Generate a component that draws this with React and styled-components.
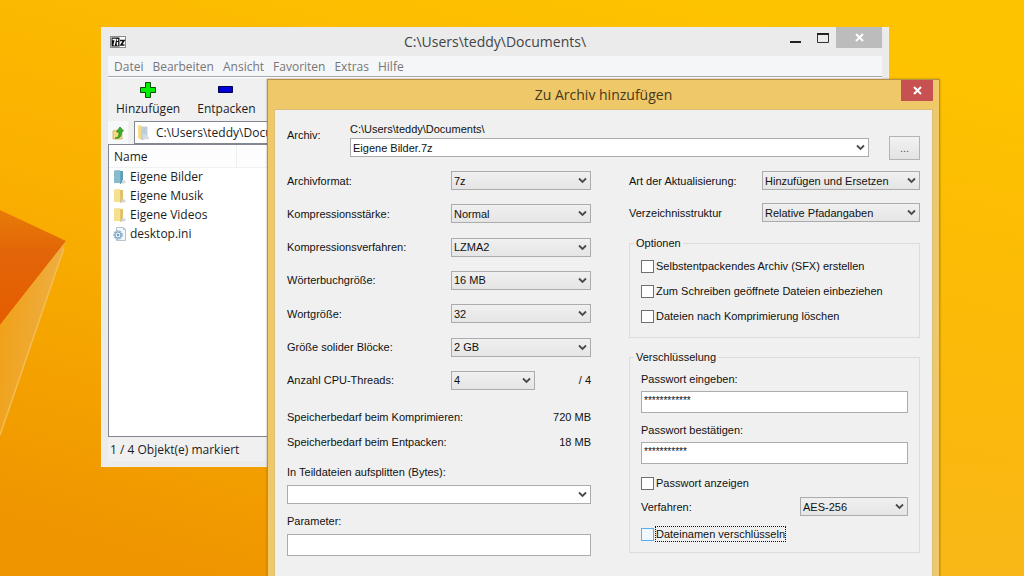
import { useState } from 'react';
import styled, { createGlobalStyle } from 'styled-components';

const GlobalStyle = createGlobalStyle`
  *, *::before, *::after {
    box-sizing: border-box;
  }

  body {
    margin: 0;
    background: #fbb000;
  }

  button, input, select {
    font: inherit;
    color: inherit;
    border-radius: 0;
    margin: 0;
  }
`;

const Desktop = styled.div`
  position: relative;
  height: 100vh;
  overflow: hidden;
`;

const Wallpaper = styled.svg`
  display: block;
  width: 100%;
  height: 100%;
`;

/* File manager window */

const ManagerWindow = styled.section`
  position: absolute;
  top: 27px;
  left: 101px;
  right: 135px;
  bottom: 109px;
  display: flex;
  flex-direction: column;
  padding: 0 6px 5px;
  border: 1px solid #f3efe4;
  border-top: 0;
  background: #ebebeb;
  color: #1c1c1c;
  font: 12px/16px 'Open Sans', sans-serif;
`;

const TitleBar = styled.header`
  display: grid;
  grid-template-columns: 1fr auto 1fr;
  height: ${({ $height }) => $height}px;
  flex: none;
`;

const Title = styled.h1`
  grid-column: 2;
  align-self: center;
  margin: 0;
  color: ${({ $color }) => $color};
  font: 14px/20px 'Open Sans', sans-serif;
`;

const AppIcon = styled.svg`
  align-self: center;
  margin-left: 2px;
`;

const WindowButtons = styled.div`
  grid-column: 3;
  display: flex;
  justify-content: flex-end;
  align-items: flex-start;
`;

const WindowButton = styled.button`
  display: flex;
  align-items: center;
  justify-content: center;
  width: ${({ $width }) => $width}px;
  height: 21px;
  padding: 0;
  border: 0;
  background: ${({ $background }) => $background || 'transparent'};
`;

const MenuBar = styled.nav`
  display: flex;
  gap: 9px;
  height: 21px;
  padding: 3px 6px 1px;
  border-bottom: 1px solid #a5a8ac;
  background: #f5f6f7;
  color: #777;
`;

const MenuButton = styled.button`
  padding: 0;
  border: 0;
  background: none;
`;

const ToolBar = styled.div`
  display: flex;
  gap: 17px;
  height: 44px;
  padding: 4px 8px 0;
  border-top: 1px solid #fff;
  background: #f0f0f0;
`;

const ToolButton = styled.button`
  display: flex;
  flex-direction: column;
  align-items: center;
  gap: 3px;
  padding: 0;
  border: 0;
  background: none;
`;

const AddressRow = styled.div`
  display: flex;
  gap: 6px;
  height: 23px;
  background: #f0f0f0;
`;

const UpButton = styled.button`
  width: 20px;
  padding: 4px 0 0;
  border: 0;
  background: #f6f8fa;
`;

const AddressField = styled.div`
  flex: 1;
  display: flex;
  align-items: center;
  gap: 6px;
  padding: 0 2px;
  border: 1px solid #828790;
  background: #fff;
`;

const AddressInput = styled.input`
  flex: 1;
  min-width: 0;
  padding: 0;
  border: 0;
  background: none;
  outline: none;
`;

const FileList = styled.div`
  flex: 1;
  border: 1px solid #828790;
  background: #fff;
`;

const FileTable = styled.table`
  border-collapse: collapse;
  width: 100%;
`;

const HeadCell = styled.th`
  width: ${({ $width }) => $width || 'auto'};
  height: 22px;
  padding: 2px 5px 0;
  border-right: 1px solid #edf0f3;
  border-bottom: 1px solid #f0f1f3;
  background: #fdfdfe;
  font-weight: 400;
  text-align: left;
`;

const FileCell = styled.td`
  height: 19px;
  padding: 0 4px;
`;

const FileName = styled.span`
  display: flex;
  align-items: center;
  gap: 3px;
`;

const StatusBar = styled.footer`
  height: 24px;
  padding: 5px 2px 3px;
  background: #f0f0f0;
`;

/* Add to archive dialog */

const DialogWindow = styled.section`
  position: absolute;
  top: 79px;
  left: 267px;
  right: 84px;
  min-height: 100%;
  display: flex;
  flex-direction: column;
  padding: 0 6px 6px;
  border: 1px solid #b78f46;
  background: #efc869;
  box-shadow: 0 0 2px rgba(90, 60, 0, 0.4);
`;

const DialogBody = styled.form`
  flex: 1;
  padding: 12px 12px 0;
  border: 1px solid #dcbd75;
  background: #f0f0f0;
  color: #111;
  font: 11px/14px 'Liberation Sans', Arial, sans-serif;
`;

const ArchiveRow = styled.div`
  display: grid;
  grid-template-columns: 63px 1fr 31px;
  height: 38px;
  margin-bottom: 11px;
`;

const ArchiveLabel = styled.label`
  margin-top: 6px;
`;

const ArchiveField = styled.div`
  display: flex;
  flex-direction: column;
  gap: 2px;
  margin-right: 20px;
`;

const BrowseButton = styled.button`
  align-self: end;
  height: 24px;
  padding: 0;
  border: 1px solid #b4b4b4;
  background: linear-gradient(#f2f2f2, #e3e3e3);
  color: #555;
`;

const Columns = styled.div`
  display: grid;
  grid-template-columns: 304fr 291fr;
  gap: 38px;
`;

const Column = styled.div`
  display: flex;
  flex-direction: column;
`;

const Settings = styled.div`
  display: flex;
  flex-direction: column;
  justify-content: space-between;
  height: ${({ $height }) => $height}px;
`;

const Row = styled.div`
  display: flex;
  align-items: center;
  justify-content: space-between;
`;

const Controls = styled.div`
  display: flex;
  align-items: center;
  justify-content: space-between;
  width: ${({ $width }) => $width}px;
`;

const SelectBox = styled.span`
  display: grid;
  width: ${({ $width }) => ($width ? `${$width}px` : '100%')};

  > * {
    grid-area: 1 / 1;
  }
`;

const SelectInput = styled.select`
  appearance: none;
  width: 100%;
  height: 19px;
  padding: 0 18px 0 2px;
  border: 1px solid #acacac;
  background: ${({ $editable }) => ($editable ? '#fff' : 'linear-gradient(#f0f0f0, #e5e5e5)')};
  outline: none;
`;

const Arrow = styled.svg`
  align-self: center;
  justify-self: end;
  margin-right: 4px;
  pointer-events: none;
`;

const Memory = styled.div`
  display: flex;
  flex-direction: column;
  gap: 11px;
  margin: 20px 0 16px;
`;

const Field = styled.div`
  display: flex;
  flex-direction: column;
  gap: ${({ $gap }) => $gap}px;
`;

const TextInput = styled.input`
  width: 100%;
  height: 22px;
  padding: 0 2px 4px;
  border: 1px solid #acacac;
  background: #fff;
  outline: none;
  font-size: ${({ $masked }) => ($masked ? 10 : 11)}px;
`;

const Group = styled.fieldset`
  min-width: 0;
  margin: ${({ $top }) => $top}px 0 0;
  padding: 0;
  border: 1px solid #dcdcdc;
`;

const Legend = styled.legend`
  margin-left: 4px;
  padding: 0 2px;
`;

const GroupBody = styled.div`
  display: flex;
  flex-direction: column;
  gap: ${({ $gap }) => $gap}px;
  padding: ${({ $padding }) => $padding};
`;

const CheckLabel = styled.label`
  display: flex;
  align-items: center;
  gap: 2px;
  height: 14px;
`;

const CheckInput = styled.input`
  appearance: none;
  flex: none;
  width: 13px;
  height: 13px;
  border: 1px solid ${({ $hot }) => ($hot ? '#5badf0' : '#707070')};
  background: ${({ $hot }) => ($hot ? '#f0f8ff' : '#fff')};
  outline: none;

  &:checked {
    box-shadow: inset 0 0 0 2px #fff, inset 0 0 0 8px #333;
  }
`;

const CheckText = styled.span`
  outline: ${({ $focused }) => ($focused ? '1px dotted #111' : 'none')};
`;

const SETTINGS = [
  { id: 'format', label: 'Archivformat:', value: '7z' },
  { id: 'level', label: 'Kompressionsstärke:', value: 'Normal' },
  { id: 'method', label: 'Kompressionsverfahren:', value: 'LZMA2' },
  { id: 'dictionary', label: 'Wörterbuchgröße:', value: '16 MB' },
  { id: 'word', label: 'Wortgröße:', value: '32' },
  { id: 'solid', label: 'Größe solider Blöcke:', value: '2 GB' },
  { id: 'threads', label: 'Anzahl CPU-Threads:', value: '4', width: 84, suffix: '/ 4' },
];

const UPDATE_SETTINGS = [
  { id: 'update', label: 'Art der Aktualisierung:', value: 'Hinzufügen und Ersetzen' },
  { id: 'paths', label: 'Verzeichnisstruktur', value: 'Relative Pfadangaben' },
];

const OPTIONS = [
  'Selbstentpackendes Archiv (SFX) erstellen',
  'Zum Schreiben geöffnete Dateien einbeziehen',
  'Dateien nach Komprimierung löschen',
];

const MENUS = ['Datei', 'Bearbeiten', 'Ansicht', 'Favoriten', 'Extras', 'Hilfe'];

const FILES = [
  { name: 'Eigene Bilder', icon: <FolderIcon front="#86bccd" back="#5f9fb6" /> },
  { name: 'Eigene Musik', icon: <FolderIcon /> },
  { name: 'Eigene Videos', icon: <FolderIcon /> },
  { name: 'desktop.ini', icon: <ConfigIcon /> },
];

function FolderIcon({ front = '#f5df90', back = '#dfc062' }) {
  return (
    <svg width="14" height="16" viewBox="0 0 14 16" aria-hidden="true">
      <path d="M6 2h4v10l1 1v1H6z" fill={back} />
      <path d="M1 1.500l5-.5 2 1v13l-2-1H1z" fill={front} />
      <path d="M7.500 2v13" stroke={back} strokeWidth=".8" />
      <path d="M9 11l3 .5 1 2-4 1.500z" fill="#d3d8dc" />
    </svg>
  );
}

function ConfigIcon() {
  return (
    <svg width="14" height="16" viewBox="0 0 14 16" aria-hidden="true">
      <path d="M3.500 1.500h7l2 2v11h-9z" fill="#f3f7fa" stroke="#b7c3cd" />
      <path d="M10.500 1.500v2h2" fill="none" stroke="#b7c3cd" />
      <circle cx="5" cy="9" r="4" fill="#dcecf7" stroke="#8fb2cd" strokeWidth="1.500" strokeDasharray="2 .8" />
      <circle cx="5" cy="9" r="3" fill="#e6f1f9" stroke="#7ba3c4" />
      <circle cx="5" cy="9" r="1.200" fill="#6d97ba" />
    </svg>
  );
}

function DocumentsIcon() {
  return (
    <svg width="13" height="17" viewBox="0 0 13 17" aria-hidden="true">
      <path d="M1 1l4 1v14l-4-2z" fill="#f5dc84" />
      <path d="M5 3h5v10l-5 3z" fill="#cfdde8" stroke="#9fb3c4" strokeWidth=".6" />
      <path d="M6 5h3M6 7h3M6 9h3" stroke="#8fa9c0" strokeWidth=".6" />
      <path d="M9 12l3 1v2l-7 1z" fill="#d8dcdf" />
    </svg>
  );
}

function UpIcon() {
  return (
    <svg width="12" height="14" viewBox="0 0 12 14" aria-hidden="true">
      <path d="M1 5l4-1 5 2v7H1z" fill="#f3dc7c" stroke="#c9a63d" strokeWidth=".7" />
      <path d="M3 12c3 0 4-1.500 4-6H4.500l3.500-5 3.500 4-2 .5c0 5-2 7.500-6.500 6.500z" fill="#38b32c" stroke="#1b7a17" strokeWidth=".7" />
    </svg>
  );
}

function SevenZipIcon() {
  return (
    <AppIcon width="16" height="12" viewBox="0 0 16 12" aria-hidden="true">
      <path d="M0 0h16v12H0z" fill="#8a8a8a" />
      <path d="M1 1h14v10H1z" fill="#fff" />
      <path d="M1.500 1.500h8v9h-8z" fill="#111" />
      <path d="M2.500 3.500h3L4 9.500M7.500 3v2M7.500 6v3.500" fill="none" stroke="#fff" strokeWidth="1.400" />
      <path d="M10 4.500h4l-3 4.500h3.500" fill="none" stroke="#111" strokeWidth="1.600" />
    </AppIcon>
  );
}

function CloseIcon() {
  return (
    <svg width="9" height="9" viewBox="0 0 9 9" aria-hidden="true">
      <path d="M1 1l7 7M8 1L1 8" stroke="#fff" strokeWidth="2" />
    </svg>
  );
}

function Select({ id, value, width, label, editable }) {
  return (
    <SelectBox $width={width}>
      <SelectInput id={id} aria-label={label} defaultValue={value} $editable={editable}>
        <option>{value}</option>
      </SelectInput>
      <Arrow width="9" height="7" viewBox="0 0 9 7" aria-hidden="true">
        <path d="M1 1.500l3.500 3.500L8 1.500" fill="none" stroke="#4a4a4a" strokeWidth="1.800" />
      </Arrow>
    </SelectBox>
  );
}

function Checkbox({ children, hot }) {
  const [checked, setChecked] = useState(false);

  return (
    <CheckLabel>
      <CheckInput
        type="checkbox"
        checked={checked}
        onChange={(e) => setChecked(e.target.checked)}
        $hot={hot}
      />
      <CheckText $focused={hot}>{children}</CheckText>
    </CheckLabel>
  );
}

function FileManager() {
  return (
    <ManagerWindow>
      <TitleBar $height={29}>
        <SevenZipIcon />
        <Title $color="#444">C:\Users\teddy\Documents\</Title>
        <WindowButtons>
          <WindowButton type="button" $width={27} aria-label="Minimieren">
            <svg width="11" height="12" viewBox="0 0 11 12" aria-hidden="true">
              <path d="M0 10h11" stroke="#222" strokeWidth="2" />
            </svg>
          </WindowButton>
          <WindowButton type="button" $width={27} aria-label="Maximieren">
            <svg width="12" height="10" viewBox="0 0 12 10" aria-hidden="true">
              <path d="M.5 1.500h11v8H.5z" fill="none" stroke="#333" />
              <path d="M0 1h12" stroke="#222" strokeWidth="2" />
            </svg>
          </WindowButton>
          <WindowButton type="button" $width={46} $background="#bcbcbc" aria-label="Schließen">
            <CloseIcon />
          </WindowButton>
        </WindowButtons>
      </TitleBar>
      <MenuBar>
        {MENUS.map((menu) => (
          <MenuButton key={menu} type="button">{menu}</MenuButton>
        ))}
      </MenuBar>
      <ToolBar>
        <ToolButton type="button">
          <svg width="16" height="16" viewBox="0 0 16 16" aria-hidden="true">
            <path d="M5.500.5h5v5h5v5h-5v5h-5v-5h-5v-5h5z" fill="#0e0" stroke="#064d06" />
          </svg>
          Hinzufügen
        </ToolButton>
        <ToolButton type="button">
          <svg width="16" height="16" viewBox="0 0 16 16" aria-hidden="true">
            <path d="M.5 4.500h14v6H.5z" fill="#0000d8" stroke="#000050" />
          </svg>
          Entpacken
        </ToolButton>
      </ToolBar>
      <AddressRow>
        <UpButton type="button" aria-label="Übergeordneter Ordner">
          <UpIcon />
        </UpButton>
        <AddressField>
          <DocumentsIcon />
          <AddressInput aria-label="Adresse" defaultValue="C:\Users\teddy\Documents\" />
        </AddressField>
      </AddressRow>
      <FileList>
        <FileTable>
          <thead>
            <tr>
              <HeadCell scope="col" $width="127px">Name</HeadCell>
              <HeadCell as="td" />
            </tr>
          </thead>
          <tbody>
            {FILES.map((file) => (
              <tr key={file.name}>
                <FileCell colSpan={2}>
                  <FileName>
                    {file.icon}
                    {file.name}
                  </FileName>
                </FileCell>
              </tr>
            ))}
          </tbody>
        </FileTable>
      </FileList>
      <StatusBar>1 / 4 Objekt(e) markiert</StatusBar>
    </ManagerWindow>
  );
}

function AddToArchive() {
  return (
    <DialogWindow role="dialog" aria-labelledby="dialog-title">
      <TitleBar $height={29}>
        <Title id="dialog-title" as="h2" $color="#45391c">Zu Archiv hinzufügen</Title>
        <WindowButtons>
          <WindowButton type="button" $width={32} $background="#c75050" aria-label="Schließen">
            <CloseIcon />
          </WindowButton>
        </WindowButtons>
      </TitleBar>
      <DialogBody onSubmit={(e) => e.preventDefault()}>
        <ArchiveRow>
          <ArchiveLabel htmlFor="archive">Archiv:</ArchiveLabel>
          <ArchiveField>
            <span>C:\Users\teddy\Documents\</span>
            <Select id="archive" value="Eigene Bilder.7z" editable />
          </ArchiveField>
          <BrowseButton type="button">...</BrowseButton>
        </ArchiveRow>

        <Columns>
          <Column>
            <Settings $height={219}>
              {SETTINGS.map(({ id, label, value, width, suffix }) => (
                <Row key={id}>
                  <label htmlFor={id}>{label}</label>
                  <Controls $width={140}>
                    <Select id={id} value={value} width={width} />
                    {suffix && <span>{suffix}</span>}
                  </Controls>
                </Row>
              ))}
            </Settings>

            <Memory>
              <Row>
                <span>Speicherbedarf beim Komprimieren:</span>
                <span>720 MB</span>
              </Row>
              <Row>
                <span>Speicherbedarf beim Entpacken:</span>
                <span>18 MB</span>
              </Row>
            </Memory>

            <Field $gap={10}>
              <Field $gap={6}>
                <label htmlFor="split">In Teildateien aufsplitten (Bytes):</label>
                <Select id="split" value="" editable />
              </Field>
              <Field $gap={6}>
                <label htmlFor="parameters">Parameter:</label>
                <TextInput id="parameters" type="text" />
              </Field>
            </Field>
          </Column>

          <Column>
            <Settings $height={51}>
              {UPDATE_SETTINGS.map(({ id, label, value }) => (
                <Row key={id}>
                  <label htmlFor={id}>{label}</label>
                  <Controls $width={158}>
                    <Select id={id} value={value} />
                  </Controls>
                </Row>
              ))}
            </Settings>

            <Group $top={14}>
              <Legend>Optionen</Legend>
              <GroupBody $gap={11} $padding="9px 11px 14px">
                {OPTIONS.map((option) => (
                  <Checkbox key={option}>{option}</Checkbox>
                ))}
              </GroupBody>
            </Group>

            <Group $top={12}>
              <Legend>Verschlüsselung</Legend>
              <GroupBody $gap={12} $padding="8px 11px 11px">
                <Field $gap={10}>
                  <Field $gap={5}>
                    <label htmlFor="password">Passwort eingeben:</label>
                    <TextInput id="password" type="text" defaultValue="************" $masked />
                  </Field>
                  <Field $gap={5}>
                    <label htmlFor="password-repeat">Passwort bestätigen:</label>
                    <TextInput id="password-repeat" type="text" defaultValue="***********" $masked />
                  </Field>
                </Field>
                <Field $gap={11}>
                  <Field $gap={7}>
                    <Checkbox>Passwort anzeigen</Checkbox>
                    <Row>
                      <label htmlFor="encryption">Verfahren:</label>
                      <Select id="encryption" value="AES-256" width={108} />
                    </Row>
                  </Field>
                  <Checkbox hot>Dateinamen verschlüsseln</Checkbox>
                </Field>
              </GroupBody>
            </Group>
          </Column>
        </Columns>
      </DialogBody>
    </DialogWindow>
  );
}

function App() {
  return (
    <Desktop>
      <GlobalStyle />
      <Wallpaper viewBox="0 0 1024 576" preserveAspectRatio="none" aria-hidden="true">
        <defs>
          <linearGradient id="sky" x1=".7" y1="0" x2=".2" y2="1">
            <stop offset="0" stopColor="#fec300" />
            <stop offset=".5" stopColor="#fab100" />
            <stop offset="1" stopColor="#ef9500" />
          </linearGradient>
          <linearGradient id="side" x1="0" y1="0" x2="0" y2="1">
            <stop offset="0" stopColor="#fec300" stopOpacity="0" />
            <stop offset="1" stopColor="#fab818" />
          </linearGradient>
          <linearGradient id="facet" x1="0" y1="0" x2="0" y2="1">
            <stop offset="0" stopColor="#e87c08" />
            <stop offset=".35" stopColor="#e26608" />
            <stop offset="1" stopColor="#e65c00" />
          </linearGradient>
          <linearGradient id="fold" x1="0" y1="0" x2="1" y2=".3">
            <stop offset="0" stopColor="#f0a012" />
            <stop offset="1" stopColor="#eeae48" />
          </linearGradient>
        </defs>
        <path d="M0 0h1024v576H0z" fill="url(#sky)" />
        <path d="M900 0h124v576H900z" fill="url(#side)" />
        <path d="M0 210l66 31L0 325z" fill="url(#facet)" />
        <path d="M66 241L0 325v110z" fill="url(#fold)" />
        <path d="M64 248L0 435" stroke="#f4bd55" strokeWidth="1.500" />
      </Wallpaper>
      <FileManager />
      <AddToArchive />
    </Desktop>
  );
}

export default App;
